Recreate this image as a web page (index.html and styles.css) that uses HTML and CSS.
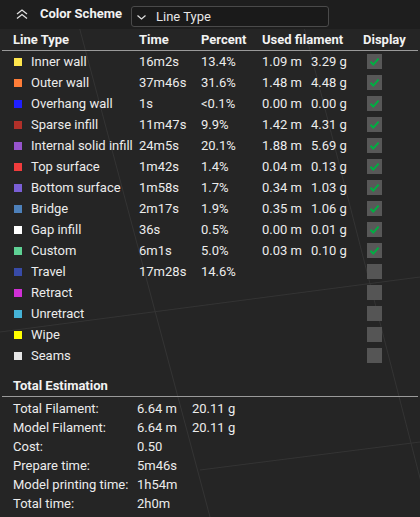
FILE: index.html
```html
<!DOCTYPE html>
<html>
<head>
<meta charset="utf-8">
<link rel="stylesheet" href="styles.css">
</head>
<body>
<div class="panel">
  <svg class="grid-bg" width="420" height="517" viewBox="0 0 420 517">
    <line x1="297" y1="0" x2="430" y2="517"/>
    <line x1="72" y1="0" x2="210" y2="517"/>
    <line x1="0" y1="332" x2="420" y2="277"/>
    <line x1="200" y1="470" x2="420" y2="442"/>
  </svg>
  <div class="content">
    <div class="topbar">
      <svg class="collapse" width="12" height="10" viewBox="0 0 12 10">
        <path d="M1 5 L6 1 L11 5 M1 9.5 L6 5.5 L11 9.5" fill="none" stroke="#e0e0e0" stroke-width="1.3"/>
      </svg>
      <span class="title">Color Scheme</span>
      <div class="select">
        <svg class="caret" width="9" height="5" viewBox="0 0 9 5">
          <path d="M0.5 0.5 L4.5 4 L8.5 0.5" fill="none" stroke="#e0e0e0" stroke-width="1.2"/>
        </svg>
        <span>Line Type</span>
      </div>
    </div>

    <div class="thead">
      <span class="h-name">Line Type</span>
      <span>Time</span>
      <span>Percent</span>
      <span class="h-used">Used filament</span>
      <span class="h-disp">Display</span>
    </div>

    <div class="rows">
      <div class="row"><i class="sw" style="background:#ffe64d"></i><span>Inner wall</span><span>16m2s</span><span>13.4%</span><span>1.09 m</span><span>3.29 g</span><b class="cb on"></b></div>
      <div class="row"><i class="sw" style="background:#ff7d38"></i><span>Outer wall</span><span>37m46s</span><span>31.6%</span><span>1.48 m</span><span>4.48 g</span><b class="cb on"></b></div>
      <div class="row"><i class="sw" style="background:#1f1fff"></i><span>Overhang wall</span><span>1s</span><span>&lt;0.1%</span><span>0.00 m</span><span>0.00 g</span><b class="cb on"></b></div>
      <div class="row"><i class="sw" style="background:#b03029"></i><span>Sparse infill</span><span>11m47s</span><span>9.9%</span><span>1.42 m</span><span>4.31 g</span><b class="cb on"></b></div>
      <div class="row"><i class="sw" style="background:#9654cc"></i><span>Internal solid infill</span><span>24m5s</span><span>20.1%</span><span>1.88 m</span><span>5.69 g</span><b class="cb on"></b></div>
      <div class="row"><i class="sw" style="background:#f03c3c"></i><span>Top surface</span><span>1m42s</span><span>1.4%</span><span>0.04 m</span><span>0.13 g</span><b class="cb on"></b></div>
      <div class="row"><i class="sw" style="background:#7a5fd6"></i><span>Bottom surface</span><span>1m58s</span><span>1.7%</span><span>0.34 m</span><span>1.03 g</span><b class="cb on"></b></div>
      <div class="row"><i class="sw" style="background:#4d80ba"></i><span>Bridge</span><span>2m17s</span><span>1.9%</span><span>0.35 m</span><span>1.06 g</span><b class="cb on"></b></div>
      <div class="row"><i class="sw" style="background:#ffffff"></i><span>Gap infill</span><span>36s</span><span>0.5%</span><span>0.00 m</span><span>0.01 g</span><b class="cb on"></b></div>
      <div class="row"><i class="sw" style="background:#5ed194"></i><span>Custom</span><span>6m1s</span><span>5.0%</span><span>0.03 m</span><span>0.10 g</span><b class="cb on"></b></div>
      <div class="row"><i class="sw" style="background:#384ba8"></i><span>Travel</span><span>17m28s</span><span>14.6%</span><span></span><span></span><b class="cb"></b></div>
      <div class="row"><i class="sw" style="background:#d02fd6"></i><span>Retract</span><span></span><span></span><span></span><span></span><b class="cb"></b></div>
      <div class="row"><i class="sw" style="background:#45b2d6"></i><span>Unretract</span><span></span><span></span><span></span><span></span><b class="cb"></b></div>
      <div class="row"><i class="sw" style="background:#ffff00"></i><span>Wipe</span><span></span><span></span><span></span><span></span><b class="cb"></b></div>
      <div class="row"><i class="sw" style="background:#e6e6e6"></i><span>Seams</span><span></span><span></span><span></span><span></span><b class="cb"></b></div>
    </div>

    <div class="est-title">Total Estimation</div>
    <div class="est">
      <div class="erow"><span>Total Filament:</span><span>6.64 m</span><span>20.11 g</span></div>
      <div class="erow"><span>Model Filament:</span><span>6.64 m</span><span>20.11 g</span></div>
      <div class="erow"><span>Cost:</span><span>0.50</span><span></span></div>
      <div class="erow"><span>Prepare time:</span><span>5m46s</span><span></span></div>
      <div class="erow"><span>Model printing time:</span><span>1h54m</span><span></span></div>
      <div class="erow"><span>Total time:</span><span>2h0m</span><span></span></div>
    </div>
  </div>
</div>
</body>
</html>
```
FILE: styles.css
```css
* { box-sizing: border-box; }
html, body {
  margin: 0;
  padding: 0;
  background: #252525;
}
body {
  width: 420px;
  height: 517px;
  overflow: hidden;
  font-family: Roboto, "Noto Sans", sans-serif;
  font-size: 13px;
  color: #ececec;
}
.panel {
  position: relative;
  width: 420px;
  height: 517px;
  background: #252525;
}
.grid-bg {
  position: absolute;
  left: 0;
  top: 0;
  z-index: 0;
}
.grid-bg line {
  stroke: #343434;
  stroke-width: 1;
}
.content {
  position: relative;
  z-index: 1;
}
.topbar {
  height: 29px;
  background: #1e1e1e;
  display: flex;
  align-items: center;
  padding-left: 16px;
}
.collapse {
  flex: none;
  margin-top: -2px;
}
.title {
  font-weight: bold;
  margin-left: 12px;
  color: #f2f2f2;
  margin-top: -2px;
}
.select {
  margin-left: 9px;
  width: 198px;
  height: 21px;
  margin-top: 4px;
  border: 1px solid #4a4a4a;
  border-radius: 3px;
  background: #1a1a1a;
  display: flex;
  align-items: center;
  padding-left: 5px;
}
.select .caret {
  flex: none;
  margin-top: 1px;
}
.select span {
  margin-left: 10px;
  color: #e6e6e6;
}
.thead, .row {
  display: grid;
  grid-template-columns: 17px 108px 62px 61px 49px 56px 1fr;
  align-items: center;
  padding-left: 14px;
}
.thead {
  height: 22px;
  font-weight: bold;
  color: #f2f2f2;
  border-bottom: 1px solid #9a9a9a;
  margin: 0 2px;
  padding-left: 12px;
  padding-bottom: 1px;
}
.thead .h-name { grid-column: 1 / 3; margin-left: -1px; }
.thead .h-used { grid-column: 5 / 7; }
.thead .h-disp { margin-left: -4px; }
.rows {
  padding-top: 0;
}
.row {
  height: 21px;
  white-space: nowrap;
}
.sw {
  display: block;
  width: 8px;
  height: 8px;
}
.cb {
  display: block;
  width: 15px;
  height: 15px;
  background: #555555;
}
.cb.on {
  background: #585858 url("data:image/svg+xml;utf8,<svg xmlns='http://www.w3.org/2000/svg' width='15' height='15' viewBox='0 0 15 15'><path d='M3.5 7.8 L6.3 10.6 L11.6 4.6' fill='none' stroke='%2300ae42' stroke-width='2'/></svg>") no-repeat center;
}
.est-title {
  margin: 8px 2px 0;
  height: 23px;
  padding-left: 11px;
  font-weight: bold;
  color: #f2f2f2;
  border-bottom: 1px solid #9a9a9a;
  display: flex;
  align-items: center;
}
.est {
  padding-left: 13px;
  padding-top: 2px;
}
.erow {
  display: grid;
  grid-template-columns: 124px 55px 1fr;
  height: 19px;
  align-items: center;
  white-space: nowrap;
}
```
